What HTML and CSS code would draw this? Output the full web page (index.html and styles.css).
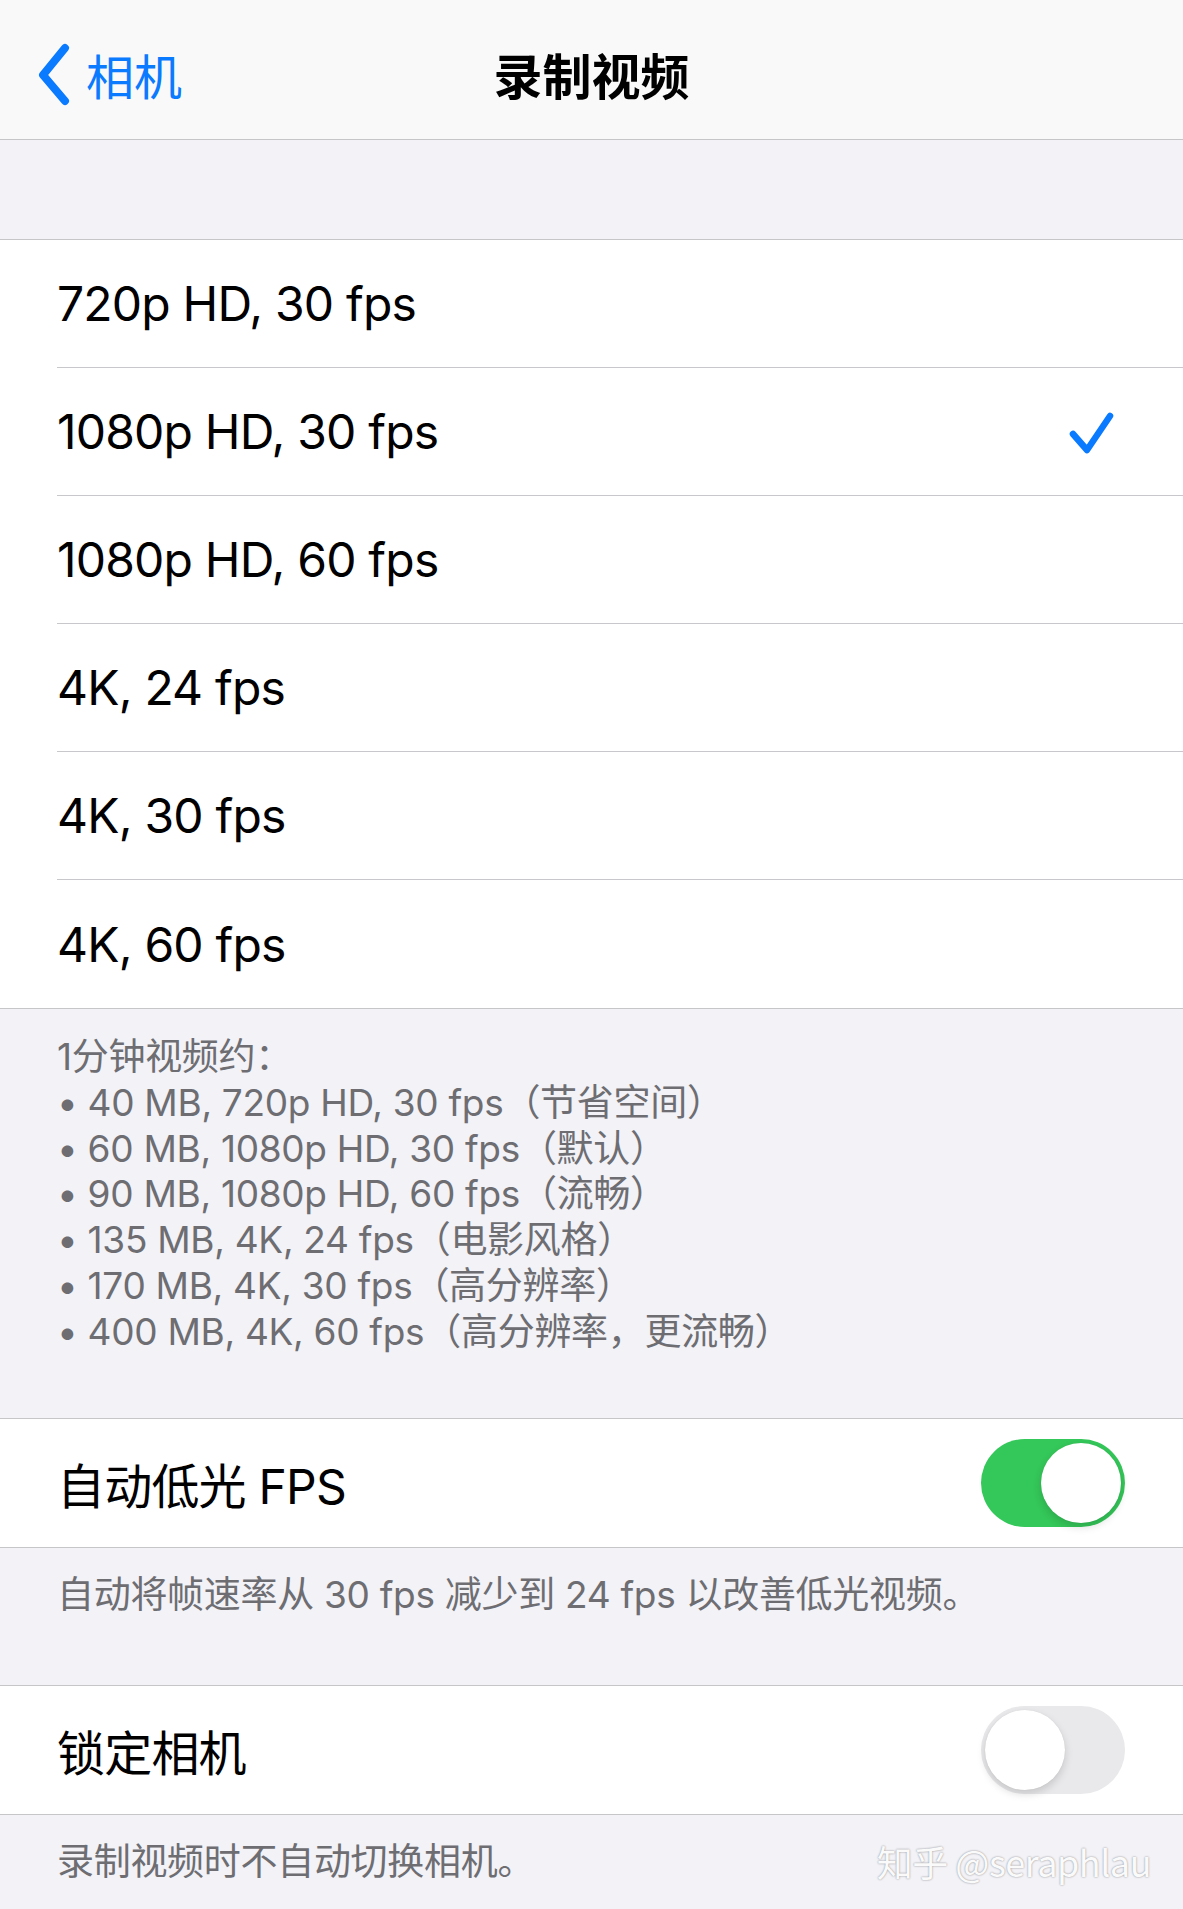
FILE: index.html
```html
<!DOCTYPE html>
<html lang="zh-CN">
<head>
  <meta charset="UTF-8" />
  <meta name="viewport" content="width=device-width, initial-scale=1.0"/>
  <title>录制视频</title>
  <link rel="stylesheet" href="styles.css">
</head>
<body>
  <div class="screen">
    <div class="nav">
      <div class="nav-back">
        <svg class="chevron" width="40" height="64" viewBox="0 0 40 64">
          <polyline points="32,6 10,33 32,59" fill="none" stroke="#0a7aff" stroke-width="8" stroke-linecap="round" stroke-linejoin="round"/>
        </svg>
        <span>相机</span>
      </div>
      <div class="nav-title">录制视频</div>
    </div>

    <div class="gap"></div>

    <div class="group">
      <div class="row"><span class="label">720p HD, 30 fps</span></div>
      <div class="row">
        <span class="label">1080p HD, 30 fps</span>
        <svg class="check" width="50" height="48" viewBox="0 0 50 48">
          <polyline points="6,26 20,42 43,8" fill="none" stroke="#0a7aff" stroke-width="6.5" stroke-linecap="round" stroke-linejoin="round"/>
        </svg>
      </div>
      <div class="row"><span class="label">1080p HD, 60 fps</span></div>
      <div class="row"><span class="label">4K, 24 fps</span></div>
      <div class="row"><span class="label">4K, 30 fps</span></div>
      <div class="row last"><span class="label">4K, 60 fps</span></div>
    </div>

    <div class="footer big">
      <div>1分钟视频约：</div>
      <div>• 40 MB, 720p HD, 30 fps（节省空间）</div>
      <div>• 60 MB, 1080p HD, 30 fps（默认）</div>
      <div>• 90 MB, 1080p HD, 60 fps（流畅）</div>
      <div>• 135 MB, 4K, 24 fps（电影风格）</div>
      <div>• 170 MB, 4K, 30 fps（高分辨率）</div>
      <div>• 400 MB, 4K, 60 fps（高分辨率，更流畅）</div>
    </div>

    <div class="group">
      <div class="row last">
        <span class="label">自动低光 FPS</span>
        <div class="switch on"><div class="knob"></div></div>
      </div>
    </div>

    <div class="footer mid">
      <div>自动将帧速率从 30 fps 减少到 24 fps 以改善低光视频。</div>
    </div>

    <div class="group">
      <div class="row last">
        <span class="label">锁定相机</span>
        <div class="switch"><div class="knob"></div></div>
      </div>
    </div>

    <div class="footer end">
      <div>录制视频时不自动切换相机。</div>
      <div class="watermark">知乎 @seraphlau</div>
    </div>
  </div>
</body>
</html>
```

FILE: styles.css
```css
body {
  margin: 0;
  padding: 0;
  background-color: #f2f2f7;
  font-family: 'Inter', 'Noto Sans CJK SC', sans-serif;
}

.screen {
  width: 1183px;
  height: 1909px;
  overflow: hidden;
  display: flex;
  flex-direction: column;
  background-color: #f2f2f7;
}

.nav {
  height: 139px;
  flex-shrink: 0;
  background-color: #f9f9fa;
  border-bottom: 1px solid #c6c6c8;
  display: flex;
  align-items: center;
  justify-content: center;
  position: relative;
}

.nav-back {
  position: absolute;
  left: 33px;
  top: 39px;
  display: flex;
  align-items: center;
  gap: 13px;
  color: #0a7aff;
  font-size: 48px;
  font-family: 'Noto Sans CJK SC', sans-serif;
}

.nav-title {
  font-size: 49px;
  font-weight: 700;
  color: #000;
  font-family: 'Noto Sans CJK SC', sans-serif;
  margin-top: 8px;
}

.gap {
  height: 99px;
  flex-shrink: 0;
}

.group {
  background-color: #fff;
  padding-left: 57px;
  border-top: 1px solid #c6c6c8;
  border-bottom: 1px solid #c6c6c8;
  flex-shrink: 0;
}

.row {
  height: 127px;
  border-bottom: 1px solid #c8c7cc;
  display: flex;
  align-items: center;
  justify-content: space-between;
  padding-right: 57px;
}

.row.last {
  border-bottom: none;
  height: 128px;
}

.label {
  font-size: 48px;
  color: #000;
  letter-spacing: -0.8px;
}

.check {
  margin-right: 9px;
}

.footer {
  flex-shrink: 0;
  padding: 0 57px;
  color: #6d6d72;
  font-size: 37px;
  line-height: 45.8px;
  letter-spacing: -0.3px;
}

.footer.big {
  height: 409px;
  padding-top: 25px;
  box-sizing: border-box;
}

.footer.mid {
  height: 137px;
  padding-top: 24px;
  box-sizing: border-box;
}

.footer.end {
  flex: 1;
  padding-top: 24px;
  display: flex;
  justify-content: space-between;
  padding-right: 32px;
}

.switch {
  width: 144px;
  height: 88px;
  border-radius: 44px;
  background-color: #e9e9eb;
  position: relative;
  box-sizing: border-box;
  margin-right: 1px;
}

.switch .knob {
  position: absolute;
  top: 4px;
  left: 4px;
  width: 80px;
  height: 80px;
  border-radius: 50%;
  background-color: #fff;
  box-shadow: 0 4px 8px rgba(0,0,0,0.15), 0 0 1px rgba(0,0,0,0.1);
}

.switch.on {
  background-color: #34c759;
}

.switch.on .knob {
  left: 60px;
}

.watermark {
  color: #fafafa;
  font-size: 36px;
  text-shadow: 0 0 2px rgba(0,0,0,0.45);
  font-family: 'Noto Sans CJK SC', sans-serif;
  letter-spacing: -0.5px;
}
```
